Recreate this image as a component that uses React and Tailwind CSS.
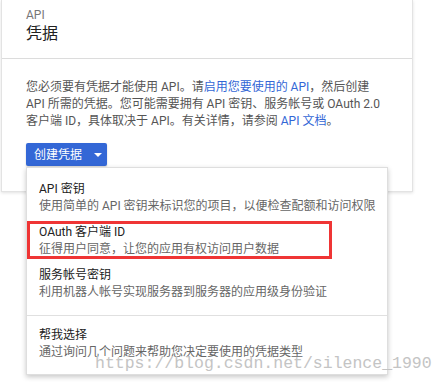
const FONT = { fontFamily: 'Roboto, "Noto Sans CJK SC", sans-serif' };

function MenuItem({ title, desc }) {
  return (
    <div className="py-1 pl-3 pr-1">
      <div className="whitespace-nowrap text-[12px] leading-[18px] text-[#212121]">{title}</div>
      <div className="whitespace-nowrap text-[12px] leading-[17px] text-[#666]">{desc}</div>
    </div>
  );
}

export default function App() {
  return (
    <div className="relative h-[383px] w-[446px] overflow-hidden bg-white" style={FONT}>
      <div className="ml-[1px] w-[412px] border-x border-b border-[#e3e3e3] bg-white shadow-[0_1px_3px_rgba(0,0,0,0.12)]">
        <div className="border-b border-[#dcdcdc] px-6 pt-[7px] pb-[13px]">
          <div className="text-[12px] leading-[16px] text-[#777]">API</div>
          <div className="text-[16px] leading-[22px] text-[#212121]">凭据</div>
        </div>

        <div className="pl-6 pr-5 pt-[20px] pb-[25px]">
          <p className="whitespace-nowrap text-[12px] leading-[17px] text-[#555]">
            您必须要有凭据才能使用 API。请
            <span className="text-[#3367d6]">启用您要使用的 API</span>
            ，然后创建
            <br />
            API 所需的凭据。您可能需要拥有 API 密钥、服务帐号或 OAuth 2.0
            <br />
            客户端 ID，具体取决于 API。有关详情，请参阅{" "}
            <span className="text-[#3367d6]">API 文档</span>。
          </p>

          <div className="relative mt-[13px]">
            <button className="flex h-[23px] w-[81px] items-center rounded-[2px] bg-[#3367d6] pl-2 text-[12px] text-white shadow-[0_1px_2px_rgba(0,0,0,0.2)]">
              创建凭据
              <span className="ml-[12px] h-0 w-0 border-x-4 border-t-4 border-x-transparent border-t-white" />
            </button>

            <div className="absolute top-[24px] left-0 z-10 w-[362px] border border-[#dedede] bg-white pt-2 pb-[9px] shadow-[0_2px_5px_rgba(0,0,0,0.22)]">
              <MenuItem title="API 密钥" desc="使用简单的 API 密钥来标识您的项目，以便检查配额和访问权限" />
              <div className="relative">
                <MenuItem title="OAuth 客户端 ID" desc="征得用户同意，让您的应用有权访问用户数据" />
                <div className="absolute top-[2px] left-0 h-[38px] w-[305px] border-[3px] border-[#ef3535]" />
              </div>
              <MenuItem title="服务帐号密钥" desc="利用机器人帐号实现服务器到服务器的应用级身份验证" />
              <div className="mt-[10px] mb-[6px] border-t border-[#e0e0e0]" />
              <MenuItem title="帮我选择" desc="通过询问几个问题来帮助您决定要使用的凭据类型" />
            </div>
          </div>
        </div>
      </div>

      <div
        className="absolute top-[354px] left-[95px] z-20 text-[16.5px] leading-[20px] text-[#c4c4c4]"
        style={{ fontFamily: '"Liberation Mono", monospace' }}
      >
        https://blog.csdn.net/silence_1990
      </div>
    </div>
  );
}
